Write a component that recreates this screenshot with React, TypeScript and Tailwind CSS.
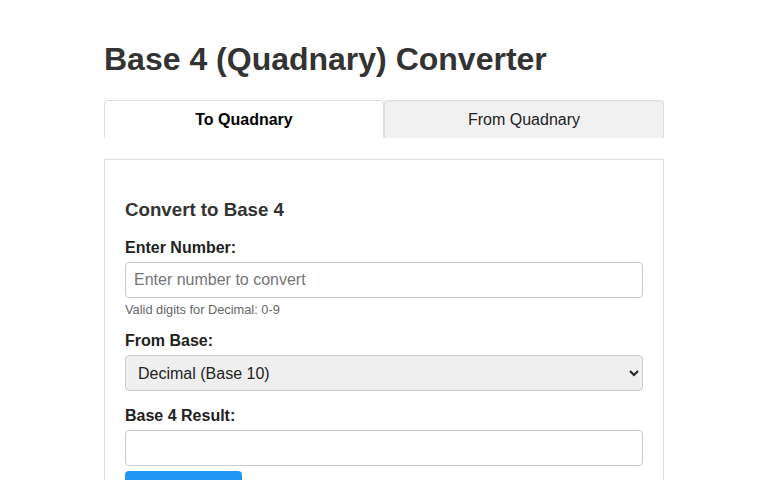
import React, { useState } from "react";

const App: React.FC = () => {
  const [tab, setTab] = useState<"to" | "from">("to");
  const [value, setValue] = useState("");
  const [base, setBase] = useState("10");

  return (
    <div className="min-h-screen bg-white p-5 font-['Liberation_Sans',Arial,sans-serif] text-[#333]">
      <div className="mx-auto max-w-[560px]">
        <h1 className="my-[21.44px] text-[32px] font-bold leading-[37px]">
          Base 4 (Quadnary) Converter
        </h1>
        <div className="flex">
          <button
            onClick={() => setTab("to")}
            className={`h-[38px] flex-1 rounded-t-[4px] border border-b-0 border-[#ddd] pt-px text-base ${
              tab === "to" ? "bg-white font-bold text-black" : "bg-[#f1f1f1] text-[#222]"
            }`}
          >
            To Quadnary
          </button>
          <button
            onClick={() => setTab("from")}
            className={`h-[38px] flex-1 rounded-t-[4px] border border-b-0 border-[#ddd] pt-px text-base ${
              tab === "from" ? "bg-white font-bold text-black" : "bg-[#f1f1f1] text-[#222]"
            }`}
          >
            From Quadnary
          </button>
        </div>
        <div className="mt-[21px] border border-[#ddd] p-5">
          <h3 className="my-[18.72px] text-[18.72px] font-bold leading-[21.5px]">
            Convert to Base 4
          </h3>
          <div className="mb-[14px]">
            <label className="mb-[5px] block text-base font-bold leading-[18.4px] text-[#222]">
              Enter Number:
            </label>
            <input
              value={value}
              onChange={(e) => setValue(e.target.value)}
              placeholder="Enter number to convert"
              className="block h-9 w-full rounded-[4px] border border-[#ccc] px-2 text-base placeholder:text-[#757575]"
            />
            <div className="mt-[5px] text-[12.8px] leading-[14.7px] text-[#666]">
              Valid digits for Decimal: 0-9
            </div>
          </div>
          <div className="mb-[16px]">
            <label className="mb-[5px] block text-base font-bold leading-[18.4px] text-[#222]">
              From Base:
            </label>
            <select
              value={base}
              onChange={(e) => setBase(e.target.value)}
              className="block h-9 w-full rounded-[4px] border border-[#ccc] bg-[#efefef] px-2 text-base text-[#222]"
            >
              <option value="10">Decimal (Base 10)</option>
              <option value="2">Binary (Base 2)</option>
              <option value="8">Octal (Base 8)</option>
              <option value="16">Hexadecimal (Base 16)</option>
            </select>
          </div>
          <div className="mb-[5px]">
            <label className="mb-[4px] block text-base font-bold leading-[18.4px] text-[#222]">
              Base 4 Result:
            </label>
            <input
              readOnly
              className="block h-9 w-full rounded-[4px] border border-[#ccc] px-2 text-base"
            />
          </div>
          <button className="h-[38px] w-[117px] rounded-[4px] bg-[#2196f3] text-base text-white">
            Convert
          </button>
        </div>
      </div>
    </div>
  );
};

export default App;
